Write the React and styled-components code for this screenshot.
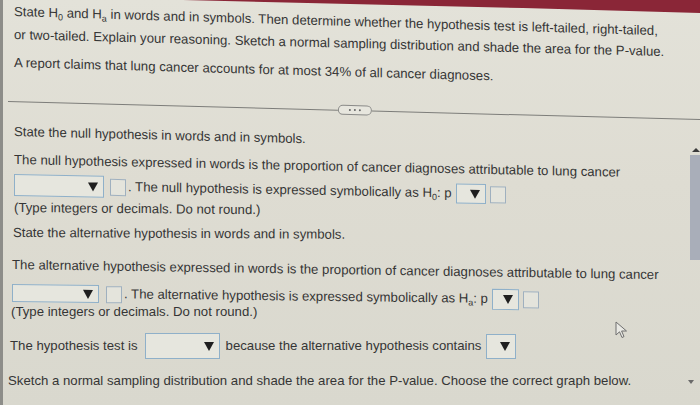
import React from 'react';
import styled, { createGlobalStyle } from 'styled-components';

const GlobalStyle = createGlobalStyle`
  body {
    margin: 0;
    background: #dddcd2;
  }
`;

const Page = styled.div`
  position: relative;
  width: 700px;
  height: 405px;
  overflow: hidden;
  box-sizing: border-box;
  border-left: 3px solid #8d8d89;
  background: linear-gradient(180deg, #e3e2d9 0%, #dedcd2 45%, #d9d8ce 100%);
  font-family: 'Liberation Sans', Arial, sans-serif;
  font-size: 13.2px;
  color: #353535;
`;

const RedEdge = styled.div`
  position: absolute;
  top: 0;
  left: 0;
  width: 700px;
  height: 14px;
  background: #8a2637;
  clip-path: polygon(180px 0, 700px 0, 700px 13px, 520px 8px);
`;

const Content = styled.div`
  padding: 4px 0 0 0;
`;

const Line = styled.p`
  margin: ${(p) => p.$mt || 0}px 0 0 ${(p) => p.$indent ?? 11}px;
  line-height: 16px;
  white-space: nowrap;
  transform: skewY(${(p) => p.$tilt || 0}deg);
  transform-origin: left center;
`;

const Row = styled.div`
  display: flex;
  align-items: center;
  height: ${(p) => p.$h || 22}px;
  margin: ${(p) => p.$mt || 0}px 0 0 ${(p) => p.$indent ?? 11}px;
  white-space: nowrap;
  transform: skewY(${(p) => p.$tilt || 0}deg);
  transform-origin: left center;
`;

const Text = styled.span`
  line-height: 16px;
`;

const Sub = styled.sub`
  font-size: 9px;
  vertical-align: -3px;
  line-height: 0;
`;

const Dropdown = styled.span`
  display: inline-flex;
  align-items: center;
  justify-content: flex-end;
  box-sizing: border-box;
  width: ${(p) => p.$w}px;
  height: ${(p) => p.$h || 20}px;
  margin: 0 ${(p) => p.$mr ?? 4}px 0 ${(p) => p.$ml ?? 0}px;
  padding-right: 5px;
  border: 1px solid #8fb0c9;
  background: #e6e6de;
`;

const Arrow = styled.span`
  width: 0;
  height: 0;
  border-left: 5px solid transparent;
  border-right: 5px solid transparent;
  border-top: 9px solid #1f1f1f;
`;

const Box = styled.span`
  display: inline-block;
  box-sizing: border-box;
  width: 16px;
  height: 17px;
  border: 1px solid #9fb0bf;
  background: #e4e4dc;
  margin-right: 2px;
`;

const Divider = styled.div`
  display: flex;
  align-items: center;
  height: 10px;
  margin: 25px 0 0 5px;
  width: 700px;
  transform: rotate(1.5deg);
  transform-origin: left center;
`;

const Rule = styled.div`
  flex: ${(p) => (p.$w ? `0 0 ${p.$w}px` : 1)};
  height: 1px;
  background: #7d7d7a;
`;

const Pill = styled.div`
  display: flex;
  align-items: center;
  justify-content: center;
  gap: 3px;
  width: 32px;
  height: 8px;
  border: 1px solid #8a8a88;
  border-radius: 6px;
  background: #e7e6de;
`;

const Dot = styled.span`
  width: 2px;
  height: 2px;
  border-radius: 1px;
  background: #666;
`;

const Scrollbar = styled.div`
  position: absolute;
  right: 0;
  top: 155px;
  width: 10px;
  height: 105px;
  background: #a9aeb9;
`;

const ScrollUp = styled.div`
  position: absolute;
  right: 0;
  top: 148px;
  width: 0;
  height: 0;
  border-left: 4px solid transparent;
  border-right: 4px solid transparent;
  border-bottom: 4px solid #3a3a3a;
`;

const ScrollDown = styled.div`
  position: absolute;
  left: 685px;
  top: 380px;
  width: 0;
  height: 0;
  border-left: 3px solid transparent;
  border-right: 3px solid transparent;
  border-top: 4px solid #6a6a6a;
`;

const Cursor = styled.svg`
  position: absolute;
  left: 612px;
  top: 321px;
`;

const Select = ({ w, h, ml, mr }) => (
  <Dropdown $w={w} $h={h} $ml={ml} $mr={mr}>
    <Arrow />
  </Dropdown>
);

export default function App() {
  return (
    <>
      <GlobalStyle />
      <Page>
        <RedEdge />
        <Content>
          <Line $tilt={1.7}>
            State H<Sub>0</Sub> and H<Sub>a</Sub> in words and in symbols. Then determine whether the hypothesis test is left-tailed, right-tailed,
          </Line>
          <Line $mt={7} $tilt={1.5}>
            or two-tailed. Explain your reasoning. Sketch a normal sampling distribution and shade the area for the P-value.
          </Line>
          <Line $mt={12} $tilt={1.6}>
            A report claims that lung cancer accounts for at most 34% of all cancer diagnoses.
          </Line>

          <Divider>
            <Rule $w={330} />
            <Pill>
              <Dot />
              <Dot />
              <Dot />
            </Pill>
            <Rule />
          </Divider>

          <Line $mt={18} $tilt={1.4}>
            State the null hypothesis in words and in symbols.
          </Line>
          <Line $mt={12} $tilt={1.2}>
            The null hypothesis expressed in words is the proportion of cancer diagnoses attributable to lung cancer
          </Line>
          <Row $mt={6} $tilt={1.1}>
            <Select w={90} h={22} mr={6} />
            <Box />
            <Text>
              . The null hypothesis is expressed symbolically as H<Sub>0</Sub>: p
            </Text>
            <Select w={30} h={20} ml={4} />
            <Box />
          </Row>
          <Line $mt={4} $tilt={0.5}>
            (Type integers or decimals. Do not round.)
          </Line>

          <Line $mt={9} $indent={10} $tilt={0.3}>
            State the alternative hypothesis in words and in symbols.
          </Line>
          <Line $mt={16} $indent={9} $tilt={0.9}>
            The alternative hypothesis expressed in words is the proportion of cancer diagnoses attributable to lung cancer
          </Line>
          <Row $mt={10} $h={20} $indent={9} $tilt={0.7}>
            <Select w={87} h={18} mr={7} />
            <Box />
            <Text>
              . The alternative hypothesis is expressed symbolically as H<Sub>a</Sub>: p
            </Text>
            <Select w={27} h={21} ml={4} />
            <Box />
          </Row>
          <Line $mt={1} $indent={8}>(Type integers or decimals. Do not round.)</Line>

          <Row $mt={13} $h={26} $indent={7}>
            <Text>The hypothesis test is</Text>
            <Select w={75} h={26} ml={7} mr={6} />
            <Text>because the alternative hypothesis contains</Text>
            <Select w={30} h={25} ml={5} />
          </Row>
          <Line $mt={14} $indent={5}>
            Sketch a normal sampling distribution and shade the area for the P-value. Choose the correct graph below.
          </Line>
        </Content>

        <ScrollUp />
        <Scrollbar />
        <ScrollDown />
        <Cursor width="14" height="18" viewBox="0 0 14 18">
          <path d="M1 1 L1 14 L4.5 10.8 L7 16.5 L9 15.6 L6.6 10 L11.5 10 Z" fill="#e9e9e4" stroke="#6f6f6f" strokeWidth="1" strokeLinejoin="round" />
        </Cursor>
      </Page>
    </>
  );
}
